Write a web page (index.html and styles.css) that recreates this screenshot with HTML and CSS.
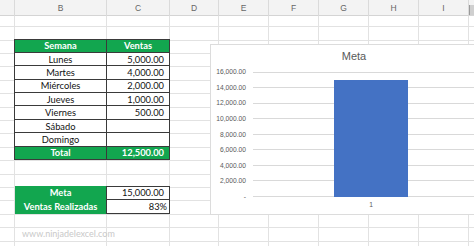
FILE: index.html
```html
<!DOCTYPE html>
<html lang="es">
<head>
<meta charset="utf-8">
<title>Meta</title>
<link rel="stylesheet" href="styles.css">
</head>
<body>
<div class="sheet">
  <div class="colheads">
    <div class="ch"></div>
    <div class="ch">B</div>
    <div class="ch">C</div>
    <div class="ch">D</div>
    <div class="ch">E</div>
    <div class="ch">F</div>
    <div class="ch">G</div>
    <div class="ch">H</div>
    <div class="ch">I</div>
    <div class="ch edge"><span class="knob"></span></div>
  </div>
  <div class="cells">
    <div class="sales">
      <div class="c hd">Semana</div><div class="c hd">Ventas</div>
      <div class="c">Lunes</div><div class="c num">5,000.00</div>
      <div class="c">Martes</div><div class="c num">4,000.00</div>
      <div class="c">Miércoles</div><div class="c num">2,000.00</div>
      <div class="c">Jueves</div><div class="c num">1,000.00</div>
      <div class="c">Viernes</div><div class="c num">500.00</div>
      <div class="c">Sábado</div><div class="c num"></div>
      <div class="c">Domingo</div><div class="c num"></div>
      <div class="c hd">Total</div><div class="c hd num">12,500.00</div>
    </div>
    <div class="goal">
      <div class="lbl">Meta</div><div class="val first">15,000.00</div>
      <div class="lbl">Ventas Realizadas</div><div class="val pct">83%</div>
    </div>
    <div class="mark">www.ninjadelexcel.com</div>

    <div class="chart">
      <div class="title">Meta</div>
      <div class="plot">
        <div class="ylabels">
          <span>16,000.00</span>
          <span>14,000.00</span>
          <span>12,000.00</span>
          <span>10,000.00</span>
          <span>8,000.00</span>
          <span>6,000.00</span>
          <span>4,000.00</span>
          <span>2,000.00</span>
          <span>-</span>
        </div>
        <div class="area">
          <div class="bar" style="height:93.75%"></div>
        </div>
        <div class="cat">1</div>
      </div>
    </div>
  </div>
</div>
</body>
</html>
```

FILE: styles.css
```css
* { box-sizing: border-box; }
html, body { margin: 0; padding: 0; overflow: hidden; background: #fff; }
body { width: 474px; height: 246px; font-family: "Lato", "Liberation Sans", sans-serif; }

.sheet { width: 474px; height: 246px; overflow: hidden; }

.colheads {
  display: grid;
  grid-template-columns: 15px 92px 63px 49px 50px 50px 50px 50px 50px 5px;
  height: 16px;
  background: #f3f3f3;
  border-bottom: 1px solid #d4d4d4;
}
.ch {
  border-right: 1px solid #dadada;
  font-family: "Liberation Sans", sans-serif;
  font-size: 8.5px;
  color: #666;
  text-align: center;
  line-height: 16px;
}
.ch.edge { border-right: none; padding-top: 5px; }
.knob { display: block; height: 10px; background: #cfcfcf; border-left: 1px solid #9a9a9a; }

.cells {
  position: relative;
  height: 230px;
  display: grid;
  grid-template-columns: 15px 92px 63px 49px 50px 50px 50px 50px 50px 5px;
  grid-template-rows: 11px 12.5px repeat(16, 13.4px);
  background-color: #fff;
  background-image:
    linear-gradient(#e2e2e2, #e2e2e2),
    linear-gradient(#e2e2e2, #e2e2e2),
    linear-gradient(#e2e2e2, #e2e2e2),
    linear-gradient(#e2e2e2, #e2e2e2),
    linear-gradient(#e2e2e2, #e2e2e2),
    linear-gradient(#e2e2e2, #e2e2e2),
    linear-gradient(#e2e2e2, #e2e2e2),
    linear-gradient(#e2e2e2, #e2e2e2),
    linear-gradient(#e2e2e2, #e2e2e2),
    repeating-linear-gradient(to bottom, transparent 0 12.4px, #e2e2e2 12.4px 13.4px);
  background-repeat: no-repeat;
  background-size: 1px 100%, 1px 100%, 1px 100%, 1px 100%, 1px 100%, 1px 100%, 1px 100%, 1px 100%, 1px 100%, 100% 100%;
  background-position: 14px 0, 106px 0, 169px 0, 218px 0, 268px 0, 318px 0, 368px 0, 418px 0, 468px 0, 0 -2.3px;
}

.sales {
  grid-column: 2 / 4;
  grid-row: 3 / 12;
  margin: -1px 0 0 -1px;
  display: grid;
  grid-template-columns: 92px 63px;
  grid-template-rows: repeat(9, 1fr);
  border-left: 1px solid #3a3a3a;
  border-top: 1px solid #3a3a3a;
  background: #fff;
  font-size: 9.3px;
  color: #111;
}
.c {
  border-right: 1px solid #3a3a3a;
  border-bottom: 1px solid #3a3a3a;
  display: flex;
  align-items: center;
  justify-content: center;
  white-space: nowrap;
}
.c.num { justify-content: flex-end; padding-right: 5px; }
.c.hd { background: #12a64f; color: #fff; font-weight: 700; }

.goal {
  grid-column: 2 / 4;
  grid-row: 14 / 16;
  margin-top: -1px;
  display: grid;
  grid-template-columns: 91px 64px;
  grid-template-rows: 1fr 1fr;
  font-size: 9.3px;
}
.lbl {
  background: #12a64f;
  color: #fff;
  font-weight: 700;
  display: flex;
  align-items: center;
  justify-content: center;
  white-space: nowrap;
}
.val {
  background: #fff;
  color: #111;
  border-left: 1px solid #3a3a3a;
  border-right: 1px solid #3a3a3a;
  border-bottom: 1px solid #3a3a3a;
  display: flex;
  align-items: center;
  justify-content: flex-end;
  padding-right: 5px;
}
.val.first { border-top: 1px solid #3a3a3a; }
.val.pct { padding-right: 2px; }

.mark {
  grid-column: 2 / 4;
  grid-row: 17;
  padding-left: 7px;
  font-size: 9px;
  color: #c9c9c9;
  white-space: nowrap;
  display: flex;
  align-items: center;
}

.chart {
  position: absolute;
  left: 210px;
  top: 28px;
  width: 288px;
  height: 171px;
  background: #fff;
  border: 1px solid #dcdcdc;
  font-family: "Liberation Sans", sans-serif;
  color: #595959;
}
.title {
  height: 27.3px;
  padding-top: 2px;
  line-height: 18px;
  text-align: center;
  font-size: 11px;
}
.plot {
  display: grid;
  grid-template-columns: 35px 236px;
  column-gap: 7px;
}
.ylabels {
  grid-column: 1;
  grid-row: 1;
  display: flex;
  flex-direction: column;
  justify-content: space-between;
  align-items: flex-end;
  margin: -4px 0 -4px 0;
  font-size: 6.7px;
  line-height: 8px;
}
.area {
  grid-column: 2;
  grid-row: 1;
  position: relative;
  height: 124.7px;
  background-image: repeating-linear-gradient(to bottom, #d9d9d9 0 1px, transparent 1px 15.4625px);
}
.bar {
  position: absolute;
  left: 81px;
  bottom: 0;
  width: 74px;
  background: #4472c4;
}
.cat {
  grid-column: 2;
  grid-row: 2;
  width: 74px;
  margin-left: 81px;
  margin-top: 4px;
  text-align: center;
  font-size: 6.7px;
  line-height: 8px;
}
```
